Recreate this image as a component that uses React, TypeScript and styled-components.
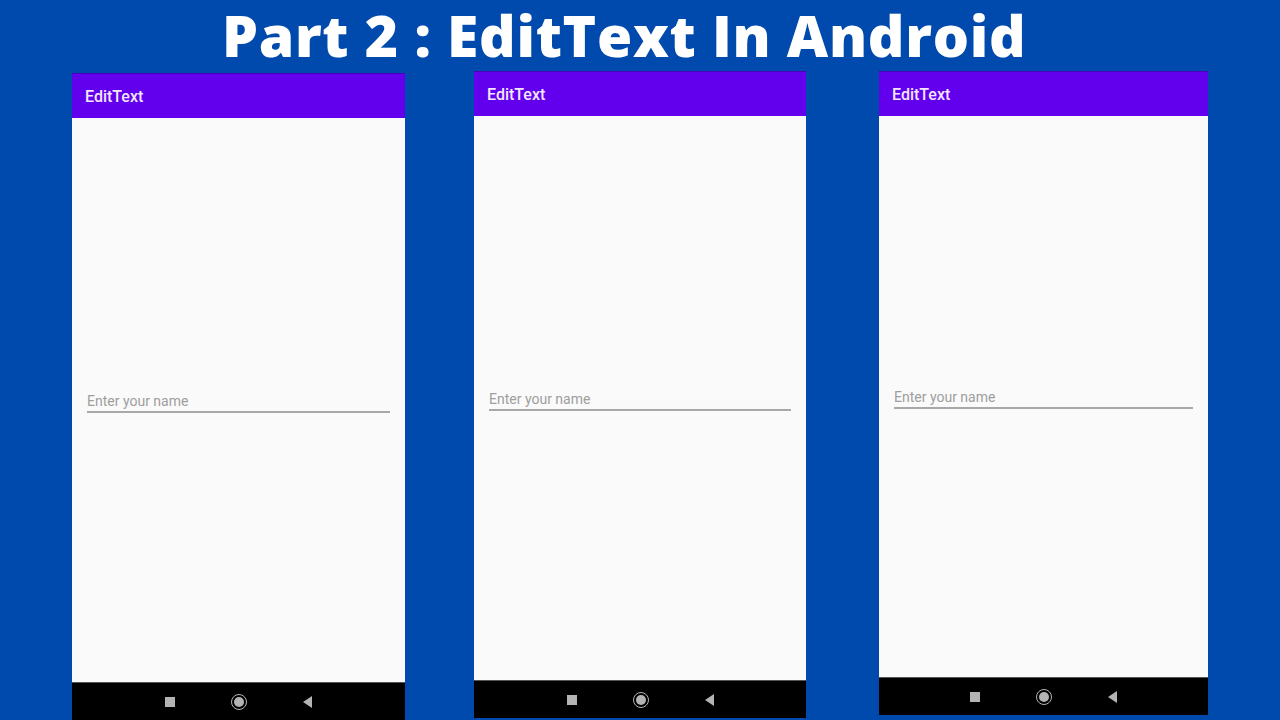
import styled, { createGlobalStyle } from "styled-components";

const GlobalStyle = createGlobalStyle`
	html, body {
		margin: 0;
		padding: 0;
		background: #004aad;
		overflow: hidden;
	}
	* {
		box-sizing: border-box;
	}
`;

const Page = styled.div`
	width: 1280px;
	height: 720px;
	background: #004aad;
	display: flex;
	flex-direction: column;
`;

const Title = styled.h1`
	margin: 0;
	padding: 0 0 0 222px;
	font-family: "Open Sans", sans-serif;
	font-weight: 800;
	font-size: 57px;
	line-height: 71px;
	color: #ffffff;
	white-space: nowrap;
	letter-spacing: 0.7px;
`;

const Row = styled.div`
	display: flex;
	align-items: flex-start;
`;

interface PhoneProps {
	$left: number;
	$width: number;
	$top: number;
	$height: number;
}

const Phone = styled.div<PhoneProps>`
	margin-left: ${(p) => p.$left}px;
	margin-top: ${(p) => p.$top}px;
	width: ${(p) => p.$width}px;
	height: ${(p) => p.$height}px;
	display: flex;
	flex-direction: column;
	background: #fafafa;
`;

const AppBar = styled.div`
	height: 45px;
	flex-shrink: 0;
	background: #6200ee;
	border-top: 1px solid #4a00c0;
	display: flex;
	align-items: center;
	padding-left: 13px;
	font-family: Roboto, "Noto Sans", sans-serif;
	font-weight: 500;
	font-size: 16px;
	color: #f3e6ff;
`;

const Content = styled.div`
	flex: 1;
	display: flex;
	flex-direction: column;
	justify-content: center;
	padding: 4px 15px 0 15px;
`;

const EditField = styled.div`
	border-bottom: 2px solid #a8a8a8;
	padding: 0 0 1px 0;
	font-family: Roboto, "Noto Sans", sans-serif;
	font-size: 14px;
	line-height: 18px;
	color: #9e9e9e;
`;

const NavBar = styled.div`
	height: 38px;
	flex-shrink: 0;
	background: #000000;
	border-top: 1px solid #555;
	display: flex;
	align-items: center;
	justify-content: center;
	gap: 56px;
`;

const NavSquare = styled.div`
	width: 10px;
	height: 10px;
	background: #b4b4b4;
`;

const NavCircle = styled.div`
	width: 16px;
	height: 16px;
	border-radius: 50%;
	border: 1.5px solid #b4b4b4;
	display: flex;
	align-items: center;
	justify-content: center;
	&::after {
		content: "";
		width: 10px;
		height: 10px;
		border-radius: 50%;
		background: #b4b4b4;
	}
`;

const NavBack = styled.div`
	width: 0;
	height: 0;
	border-top: 6px solid transparent;
	border-bottom: 6px solid transparent;
	border-right: 9px solid #b4b4b4;
`;

const phones = [
	{ left: 72, width: 333, top: 2, height: 647 },
	{ left: 69, width: 332, top: 0, height: 647 },
	{ left: 73, width: 329, top: 0, height: 644 },
];

const App = () => (
	<>
		<GlobalStyle />
		<Page>
			<Title>Part 2 : EditText In Android</Title>
			<Row>
				{phones.map((p, i) => (
					<Phone key={i} $left={p.left} $width={p.width} $top={p.top} $height={p.height}>
						<AppBar>EditText</AppBar>
						<Content>
							<EditField>Enter your name</EditField>
						</Content>
						<NavBar>
							<NavSquare />
							<NavCircle />
							<NavBack />
						</NavBar>
					</Phone>
				))}
			</Row>
		</Page>
	</>
);

export default App;
